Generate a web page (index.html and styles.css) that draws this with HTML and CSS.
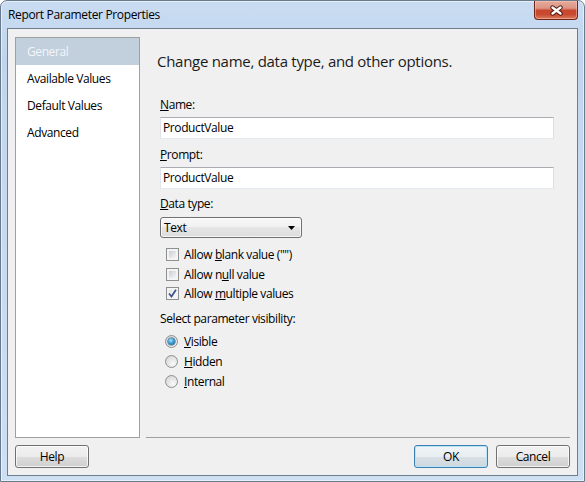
FILE: index.html
```html
<!DOCTYPE html>
<html lang="en">
<head>
<meta charset="utf-8">
<title>Report Parameter Properties</title>
<link rel="stylesheet" href="styles.css">
</head>
<body>
<div class="window">
  <div class="titlebar">
    <span class="title">Report Parameter Properties</span>
    <button class="close" type="button" aria-label="Close">
      <svg width="15" height="11" viewBox="0 0 15 11" aria-hidden="true">
        <path d="M3.5 2.5 L11.5 8.5 M11.5 2.5 L3.5 8.5" stroke="#4e1a12" stroke-width="4.4" stroke-linecap="round" fill="none"/>
        <path d="M3.5 2.5 L11.5 8.5 M11.5 2.5 L3.5 8.5" stroke="#ffffff" stroke-width="2.4" stroke-linecap="round" fill="none"/>
      </svg>
    </button>
  </div>

  <div class="client">
    <div class="main">
      <ul class="nav">
        <li class="nav-item is-selected">General</li>
        <li class="nav-item">Available Values</li>
        <li class="nav-item">Default Values</li>
        <li class="nav-item">Advanced</li>
      </ul>

      <section class="pane">
        <h1 class="heading">Change name, data type, and other options.</h1>

        <label class="field-label label-name"><u>N</u>ame:</label>
        <div class="textbox">ProductValue</div>

        <label class="field-label label-gap"><u>P</u>rompt:</label>
        <div class="textbox">ProductValue</div>

        <label class="field-label label-type"><u>D</u>ata type:</label>
        <div class="combo">
          <span class="combo-value">Text</span>
          <svg class="combo-arrow" width="7" height="4" viewBox="0 0 7 4" aria-hidden="true">
            <path d="M0 0 H7 L3.5 4 Z" fill="#000"/>
          </svg>
        </div>

        <div class="options">
          <div class="option">
            <span class="check"><span class="check-fill"></span></span>
            <span>Allow <u>b</u>lank value ("")</span>
          </div>
          <div class="option">
            <span class="check"><span class="check-fill"></span></span>
            <span>Allow n<u>u</u>ll value</span>
          </div>
          <div class="option">
            <span class="check is-checked">
              <span class="check-fill">
                <svg width="9" height="9" viewBox="0 0 9 9" aria-hidden="true">
                  <path d="M1 4.5 L3.5 7.5 L8 0.8" stroke="#3f5288" stroke-width="1.7" fill="none"/>
                </svg>
              </span>
            </span>
            <span>Allow <u>m</u>ultiple values</span>
          </div>
        </div>

        <div class="field-label label-visibility">Select parameter visibility:</div>

        <div class="radios">
          <div class="option radio-row">
            <span class="radio is-selected"><span class="radio-dot"></span></span>
            <span><u>V</u>isible</span>
          </div>
          <div class="option radio-row">
            <span class="radio"></span>
            <span><u>H</u>idden</span>
          </div>
          <div class="option radio-row">
            <span class="radio"></span>
            <span><u>I</u>nternal</span>
          </div>
        </div>
      </section>
    </div>

    <div class="footer">
      <button class="btn" type="button">Help</button>
      <div class="footer-spacer"></div>
      <button class="btn btn-default" type="button">OK</button>
      <button class="btn" type="button">Cancel</button>
    </div>
  </div>
</div>
</body>
</html>
```

FILE: styles.css
```css
* {
  box-sizing: border-box;
}

html, body {
  margin: 0;
  padding: 0;
  background: #ffffff;
}

body {
  font-family: "Open Sans", "Noto Sans", "DejaVu Sans", sans-serif;
  font-size: 12px;
  letter-spacing: -0.4px;
  color: #000;
}

u {
  text-decoration: underline;
  text-decoration-thickness: 1px;
  text-underline-offset: 1px;
}

/* Aero window frame */
.window {
  width: 585px;
  height: 482px;
  border: 1px solid #6a7a8d;
  border-radius: 7px 7px 0 0;
  padding: 0 6px 5px 6px;
  display: flex;
  flex-direction: column;
  background: linear-gradient(180deg, #c9dcf2 0%, #c0d5ed 12%, #c6d9f0 40%, #cddff3 100%);
  box-shadow: inset 0 0 0 1px rgba(255, 255, 255, 0.55);
}

.titlebar {
  height: 27px;
  display: flex;
  align-items: flex-start;
  flex: none;
}

.title {
  padding: 6px 0 0 1px;
  line-height: 15px;
  letter-spacing: -0.35px;
  color: #000;
}

.close {
  margin-left: auto;
  width: 44px;
  height: 19px;
  padding: 0;
  border: 1px solid #6f2419;
  border-top: none;
  border-radius: 0 0 4px 4px;
  display: flex;
  align-items: center;
  justify-content: center;
  background: linear-gradient(180deg, #e7aa9c 0%, #dc9484 40%, #c8472f 52%, #c94a31 75%, #dc7a5c 100%);
  box-shadow: inset 0 0 0 1px rgba(255, 210, 200, 0.45);
}

.close svg {
  display: block;
  margin-top: 1px;
}

/* Client area */
.client {
  height: 448px;
  border: 1px solid #6f7d8c;
  background: #f0f0f0;
  padding: 8px 7px 7px 7px;
  display: flex;
  flex-direction: column;
}

.main {
  height: 401px;
  display: flex;
  gap: 6px;
  flex: none;
}

/* Page list */
.nav {
  width: 125px;
  margin: 0;
  padding: 0;
  list-style: none;
  background: #ffffff;
  border: 1px solid #a0a0a0;
}

.nav-item {
  height: 27px;
  line-height: 27px;
  padding-left: 11px;
  white-space: nowrap;
}

.nav-item.is-selected {
  background: #c2cfdc;
  color: #f3f6f9;
}

/* Property page */
.pane {
  flex: 1;
  display: flex;
  flex-direction: column;
  align-items: flex-start;
  padding-left: 14px;
  border-bottom: 1px solid #a0a0a0;
}

.heading {
  margin: 14px 0 0 -3px;
  font-size: 15px;
  font-weight: normal;
  line-height: 20px;
  letter-spacing: -0.28px;
  color: #1b1b1b;
}

.field-label {
  display: block;
  line-height: 15px;
}

.label-name {
  margin-top: 26px;
}

.label-gap {
  margin-top: 8px;
}

.label-type {
  margin-top: 7px;
}

.label-visibility {
  margin-top: 7px;
}

.textbox {
  margin-top: 5px;
  width: 394px;
  height: 22px;
  padding: 1px 2px 0;
  line-height: 18px;
  background: #ffffff;
  border: 1px solid;
  border-color: #abadb3 #dbdfe6 #e3e9ef #e2e3ea;
}

.combo {
  margin-top: 6px;
  width: 142px;
  height: 21px;
  padding: 0 6px 0 3px;
  display: flex;
  align-items: center;
  justify-content: space-between;
  border: 1px solid #707070;
  border-radius: 3px;
  background: linear-gradient(180deg, #f8f8f8 0%, #f0f0f0 50%, #e6e6e6 50%, #dcdcdc 100%);
  box-shadow: inset 0 0 0 1px rgba(255, 255, 255, 0.7);
}

.combo-value {
  line-height: 15px;
}

.combo-arrow {
  display: block;
}

/* Check boxes and radio buttons */
.options {
  margin-top: 7px;
}

.option {
  height: 19.5px;
  display: flex;
  align-items: center;
  gap: 5px;
  padding-left: 6px;
  white-space: nowrap;
}

.radios {
  margin-top: 6px;
}

.radio-row {
  height: 20px;
  padding-left: 5px;
  gap: 6px;
}

.check {
  width: 13px;
  height: 13px;
  flex: none;
  border: 1px solid #8e8f8f;
  background: #f4f4f4;
  padding: 2px;
  display: flex;
}

.check-fill {
  flex: 1;
  display: flex;
  align-items: center;
  justify-content: center;
  background: linear-gradient(135deg, #cbcfd5 0%, #dfe1e4 50%, #f6f6f6 100%);
  overflow: visible;
}

.check.is-checked .check-fill {
  background: linear-gradient(135deg, #dfe2e7 0%, #eceef1 50%, #fafafa 100%);
}

.check-fill svg {
  display: block;
  flex: none;
  margin: -1px;
}

.radio {
  width: 13px;
  height: 13px;
  flex: none;
  border-radius: 50%;
  border: 1px solid #8e8f8f;
  display: flex;
  align-items: center;
  justify-content: center;
  background: radial-gradient(circle at 65% 70%, #fafafa 0%, #e6e6e6 45%, #cfd1d4 100%);
}

.radio-dot {
  width: 7px;
  height: 7px;
  border-radius: 50%;
  background: radial-gradient(circle at 40% 35%, #a8e6ff 0%, #3d9ad0 45%, #135a88 100%);
  box-shadow: 0 0 0 0.5px #1d4f72;
}

/* Dialog buttons */
.footer {
  margin-top: 7px;
  height: 23px;
  display: flex;
  gap: 8px;
  flex: none;
}

.footer-spacer {
  flex: 1;
}

.btn {
  width: 74px;
  height: 23px;
  padding: 0;
  font: inherit;
  letter-spacing: inherit;
  color: #000;
  border: 1px solid #707070;
  border-radius: 3px;
  background: linear-gradient(180deg, #f2f2f2 0%, #ebebeb 50%, #dddddd 50%, #cfcfcf 100%);
  box-shadow: inset 0 0 0 1px rgba(255, 255, 255, 0.75);
}

.btn-default {
  border-color: #3c7fb1;
  box-shadow: inset 0 0 0 1px #b8e3f8;
  background: linear-gradient(180deg, #f0f4f6 0%, #e8eef1 50%, #d9e1e6 50%, #cdd7dd 100%);
}
```
